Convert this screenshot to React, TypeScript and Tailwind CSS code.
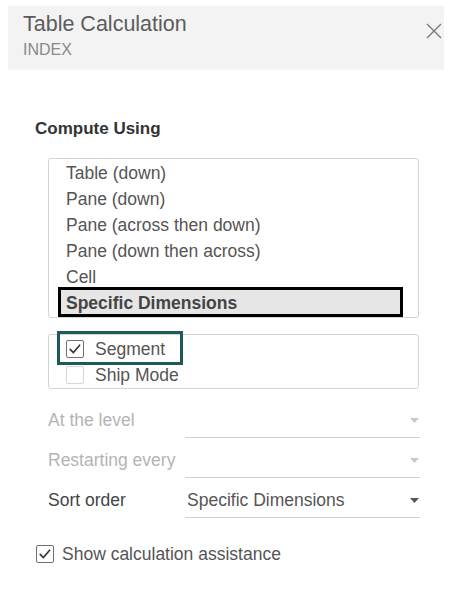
import React from "react";

const font = { fontFamily: '"Liberation Sans", Arial, sans-serif' };

function Check({ checked, light }: { checked?: boolean; light?: boolean }) {
  return (
    <div
      className={
        "w-[18px] h-[18px] shrink-0 rounded-[2px] border bg-white flex items-center justify-center " +
        (light ? "border-[#d6d6d6]" : "border-[#707070]")
      }
    >
      {checked && (
        <svg width="16" height="16" viewBox="0 0 16 16">
          <path d="M3.2 8.4 L6.4 11.6 L12.6 4.2" fill="none" stroke="#333" strokeWidth="1.6" strokeLinecap="round" strokeLinejoin="round" />
        </svg>
      )}
    </div>
  );
}

function Arrow({ dark }: { dark?: boolean }) {
  return (
    <svg width="9" height="5" viewBox="0 0 9 5">
      <path d="M0 0 L9 0 L4.5 5 Z" fill={dark ? "#555" : "#c8c8c8"} />
    </svg>
  );
}

export default function App() {
  const items = ["Table (down)", "Pane (down)", "Pane (across then down)", "Pane (down then across)", "Cell"];
  return (
    <div className="w-[450px] h-[590px] bg-white overflow-hidden pt-[6px]" style={font}>
      <div className="ml-[8px] w-[436px] h-[64px] bg-[#f3f3f3] flex justify-between pl-[15px] pr-[2px] pt-[6px]">
        <div>
          <div className="text-[21.5px] leading-[24px] text-[#5c5c5c]">Table Calculation</div>
          <div className="mt-[4px] text-[16px] leading-[20px] text-[#8a8a8a]">INDEX</div>
        </div>
        <svg className="mt-[11px]" width="16" height="16" viewBox="0 0 16 16">
          <path d="M1 1 L15 15 M15 1 L1 15" stroke="#7a7a7a" strokeWidth="1.4" fill="none" />
        </svg>
      </div>

      <div className="mt-[49px] ml-[35px] text-[17px] leading-[20px] font-bold text-[#333]">Compute Using</div>

      <div className="mt-[19px] ml-[48px] w-[371px] h-[160px] border border-[#d4d4d4] rounded-[3px] pt-[1px] overflow-hidden">
        {items.map((t) => (
          <div key={t} className="h-[26px] leading-[26px] pl-[17px] text-[17.5px] text-[#555] whitespace-nowrap">
            {t}
          </div>
        ))}
        <div className="-mt-[3px] ml-[9px] w-[345px] h-[30px] border-[3px] border-black bg-[#e6e6e6] pl-[5px] font-bold leading-[26px] text-[17.5px] text-[#444] whitespace-nowrap">
          Specific Dimensions
        </div>
      </div>

      <div className="relative mt-[16px] ml-[48px] w-[371px] h-[55px] border border-[#d4d4d4] rounded-[3px] pt-[1px] overflow-visible">
        <div className="absolute left-[8px] top-[-4px] w-[126px] h-[34px] border-[3px] border-[#1d5b5b]" />
        <div className="h-[26px] pl-[17px] flex items-center gap-[11px] text-[17.5px] text-[#555]">
          <Check checked />
          <span>Segment</span>
        </div>
        <div className="h-[26px] pl-[17px] flex items-center gap-[11px] text-[17.5px] text-[#555]">
          <Check light />
          <span>Ship Mode</span>
        </div>
      </div>

      <div className="mt-[14px] ml-[48px] w-[372px] flex flex-col gap-[5px] text-[17.5px]">
        {[
          { l: "At the level", v: "", d: false },
          { l: "Restarting every", v: "", d: false },
          { l: "Sort order", v: "Specific Dimensions", d: true },
        ].map((r) => (
          <div key={r.l} className="flex h-[35px]">
            <div className={"w-[137px] flex items-center whitespace-nowrap " + (r.d ? "text-[#444]" : "text-[#b4b4b4]")}>{r.l}</div>
            <div className="flex-1 border-b border-[#d0d0d0] flex items-center justify-between pl-[2px] pr-[1px]">
              <span className="text-[#555] whitespace-nowrap">{r.v}</span>
              <Arrow dark={r.d} />
            </div>
          </div>
        ))}
      </div>

      <div className="mt-[27px] ml-[36px] flex items-center gap-[8px] h-[18px] text-[17.5px] text-[#555]">
        <Check checked />
        <span>Show calculation assistance</span>
      </div>
    </div>
  );
}
